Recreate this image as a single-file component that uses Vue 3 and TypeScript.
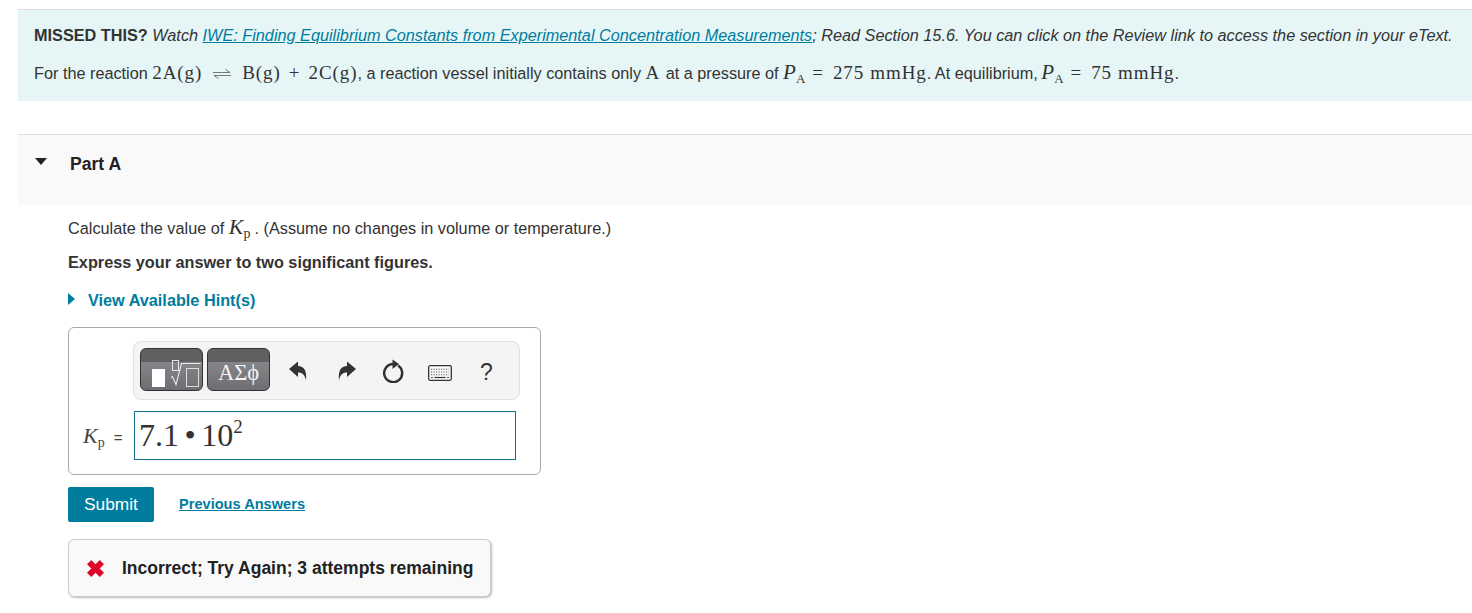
<script setup lang="ts">
const tools = ['undo', 'redo', 'reset', 'keyboard', 'help']
</script>

<template>
  <div class="page">
    <section class="banner">
      <p class="missed">
        <strong>MISSED THIS?</strong>
        <em> Watch <a href="#">IWE: Finding Equilibrium Constants from Experimental Concentration Measurements</a>; Read Section 15.6. You can click on the Review link to access the section in your eText.</em>
      </p>
      <p class="reaction">
        For the reaction
        <span class="m">2A(g)</span>
        <svg class="eq" viewBox="0 0 18 10" width="18" height="10"><path d="M0 3.500h17l-4.500-3M18 6.500H1l4.500 3" fill="none" stroke="#777" stroke-width="1"/></svg>
        <span class="m wide">B(g) + 2C(g)</span>, a reaction vessel initially contains only <span class="m sp">A</span> at a pressure of
        <span class="m"><i>P</i><sub>A</sub><span class="rel">=</span>275 mmHg</span>. At equilibrium,
        <span class="m second"><i>P</i><sub>A</sub><span class="rel">=</span>75 mmHg</span>.
      </p>
    </section>

    <section class="part">
      <header class="part-head">
        <span class="caret-down"></span>
        <h2>Part A</h2>
      </header>
      <div class="part-body">
        <p class="q">Calculate the value of <span class="m k"><i>K</i><sub>p</sub></span>. (Assume no changes in volume or temperature.)</p>
        <p class="instr">Express your answer to two significant figures.</p>
        <p class="hint"><span class="caret-right"></span><a href="#">View Available Hint(s)</a></p>

        <div class="answer">
          <div class="toolbar">
            <button class="tpl">
              <svg viewBox="0 0 61 41" width="61" height="41">
                <rect x="11" y="20" width="13" height="18" fill="#fff"/>
                <rect x="31.500" y="11.500" width="6" height="10" fill="none" stroke="#e8e8e8"/>
                <path d="M30 28.500l1.500-1 3.500 8 5.500-21h19" fill="none" stroke="#e8e8e8" stroke-width="1.100"/>
                <rect x="45.500" y="19.500" width="12" height="18" fill="none" stroke="#ddd"/>
              </svg>
            </button>
            <button class="tpl greek">ΑΣϕ</button>
            <span class="tools">
              <span v-for="t in tools" :key="t" class="tool" :class="t">
                <svg v-if="t === 'undo'" viewBox="0 0 18 20" width="18" height="20"><path d="M0 8 9 .5V5c6 .2 9 4.500 8 14.500-1-5.500-3.500-8-8-8V16z" fill="#333"/></svg>
                <svg v-else-if="t === 'redo'" viewBox="0 0 18 20" width="18" height="20"><path d="M18 8 9 .5V5c-6 .2-9 4.500-8 14.500 1-5.500 3.500-8 8-8V16z" fill="#333"/></svg>
                <svg v-else-if="t === 'reset'" viewBox="0 0 24 24" width="24" height="24"><path d="M16 6.500a9 9 0 1 1-5-1.400" fill="none" stroke="#333" stroke-width="2.500"/><path d="M10.500.5v9.500l6.500-5z" fill="#333"/></svg>
                <svg v-else-if="t === 'keyboard'" viewBox="0 0 24 16" width="24" height="16"><rect x=".7" y=".7" width="22.600" height="14.600" rx="1.500" fill="#fafafa" stroke="#333" stroke-width="1.300"/><path d="M3 4.300h18M3 7h18M3 9.700h18" stroke="#555" stroke-width="1.100" stroke-dasharray="1.200 1.300"/><path d="M3 12.500h2M19 12.500h2" stroke="#555" stroke-width="1.100"/><path d="M6.500 12.500h11" stroke="#333" stroke-width="1.200"/></svg>
                <span v-else class="q-mark">?</span>
              </span>
            </span>
          </div>
          <div class="entry">
            <label class="m lbl"><i>K</i><sub>p</sub><span class="eqs">=</span></label>
            <div class="input">7.1<span class="dot">•</span>10<sup>2</sup></div>
          </div>
        </div>

        <div class="actions">
          <button class="submit">Submit</button>
          <a class="prev" href="#">Previous Answers</a>
        </div>

        <div class="feedback">
          <svg viewBox="0 0 18 18" width="17" height="17"><path d="M4.500 0 9 4.500 13.500 0 18 4.500 13.500 9 18 13.500 13.500 18 9 13.500 4.500 18 0 13.500 4.500 9 0 4.500z" fill="#e0062b"/></svg>
          <span>Incorrect; Try Again; 3 attempts remaining</span>
        </div>
      </div>
    </section>
  </div>
</template>

<style>
body { margin: 0; background: #fff; }
</style>

<style scoped>
.page {
  width: 1472px;
  height: 613px;
  overflow: hidden;
  box-sizing: border-box;
  padding: 9px 0 0 18px;
  font-family: "Liberation Sans", Arial, sans-serif;
  font-size: 16.25px;
  color: #333;
}
p { margin: 0; }
a { color: #007c9e; }
.banner {
  height: 92px;
  box-sizing: border-box;
  background: #e6f6f6;
  border-top: 1px solid #ddd;
  padding: 15px 0 0 16px;
  white-space: nowrap;
}
.missed { line-height: 20px; }
.reaction { line-height: 26px; margin-top: 14px; }
.m { font-family: "Liberation Serif", serif; font-size: 19px; letter-spacing: .9px; word-spacing: .5px; }
.m i { font-style: italic; font-size: 21px; letter-spacing: 0; }
.wide { word-spacing: 2.500px; }
.sp { margin-right: 1px; }
.second { margin-left: -1px; }
.rel { margin: 0 9px 0 7px; }
sub { font-size: 13px; line-height: 0; vertical-align: -4px; letter-spacing: 0; }
.eq { margin: 0 11px 0 11px; vertical-align: 0; }
.part { margin-top: 33px; }
.part-head {
  height: 71px;
  box-sizing: border-box;
  background: #f9f9f9;
  border-top: 1px solid #ddd;
  display: flex;
  align-items: flex-start;
  padding: 19px 0 0 17px;
}
.caret-down {
  width: 0; height: 0;
  border-left: 6.500px solid transparent;
  border-right: 6.500px solid transparent;
  border-top: 7px solid #222;
  margin-top: 4px;
}
h2 { margin: 0 0 0 23px; font-size: 17.600px; line-height: 20px; font-weight: 700; color: #222; }
.part-body { padding: 10px 0 0 50px; }
.q { line-height: 24px; }
.k { font-size: 22px; }
.k i { font-size: 22px; }
.k sub { font-size: 14px; margin-right: 4px; }
.instr { font-weight: 700; line-height: 20px; margin-top: 12px; }
.hint { display: flex; align-items: center; margin-top: 18px; line-height: 20px; font-weight: 700; }
.hint a { text-decoration: none; }
.caret-right {
  width: 0; height: 0;
  border-top: 6px solid transparent;
  border-bottom: 6px solid transparent;
  border-left: 7px solid #007c9e;
  margin-right: 13px;
  margin-top: -2px;
}
.answer {
  width: 473px;
  height: 148px;
  box-sizing: border-box;
  margin-top: 17px;
  border: 1px solid #aaa;
  border-radius: 6px;
  padding: 13px 20px 0 14px;
}
.toolbar {
  margin-left: 50px;
  height: 59px;
  box-sizing: border-box;
  background: #f4f4f4;
  border: 1px solid #e0e0e0;
  border-radius: 8px;
  display: flex;
  align-items: flex-start;
  padding: 6px 0 0 6px;
  gap: 4px;
}
.tpl {
  width: 63px;
  height: 43px;
  padding: 0;
  box-sizing: border-box;
  border: 1px solid #333;
  border-radius: 6px;
  background: linear-gradient(#606060 0, #606060 32%, #85858a 32%, #6e6e72 100%);
  display: flex;
  align-items: center;
  justify-content: center;
  color: #f2f2f2;
  font-family: "Liberation Serif", serif;
}
.greek { font-size: 22.500px; line-height: 22px; padding-top: 7px; }
.tools { display: flex; align-items: center; height: 45px; margin-left: 2px; }
.tool { width: 47px; display: flex; justify-content: center; align-items: center; }
.undo svg { margin-right: 3px; }
.keyboard svg { margin: 5px 2px 0 0; }
.help { padding: 3px 2px 0 0; box-sizing: border-box; }
.q-mark { font-size: 23px; color: #333; }
.entry { display: flex; align-items: center; margin-top: 11px; }
.lbl { width: 51px; white-space: nowrap; font-size: 22px; color: #444; letter-spacing: 0; }
.lbl i { font-size: 22px; }
.lbl sub { font-size: 14px; }
.eqs { font-family: "Liberation Sans", sans-serif; font-size: 15px; margin-left: 9px; }
.input {
  width: 382px;
  height: 49px;
  box-sizing: border-box;
  border: 1px solid #1a6f8a;
  padding-left: 4px;
  font-family: "Liberation Serif", serif;
  font-size: 32px;
  line-height: 47px;
  color: #333;
}
.dot { margin: 0 5.500px 0 5.500px; }
sup { font-size: 19px; line-height: 0; vertical-align: 13px; }
.actions { display: flex; align-items: center; margin-top: 12px; }
.submit {
  width: 86px;
  height: 35px;
  border: 0;
  border-radius: 2px;
  background: #007c9e;
  color: #fff;
  font: 17.300px "Liberation Sans", sans-serif;
}
.prev { margin: 0 0 2px 25px; font-weight: 700; font-size: 14.600px; }
.feedback {
  width: 423px;
  height: 58px;
  box-sizing: border-box;
  margin-top: 17px;
  background: #f9f9f9;
  border: 1px solid #ccc;
  border-radius: 6px;
  box-shadow: 1px 1px 2px #bbb;
  display: flex;
  align-items: center;
  padding-left: 18px;
  gap: 18px;
  font-weight: 700;
  font-size: 17.500px;
  color: #222;
}
</style>
